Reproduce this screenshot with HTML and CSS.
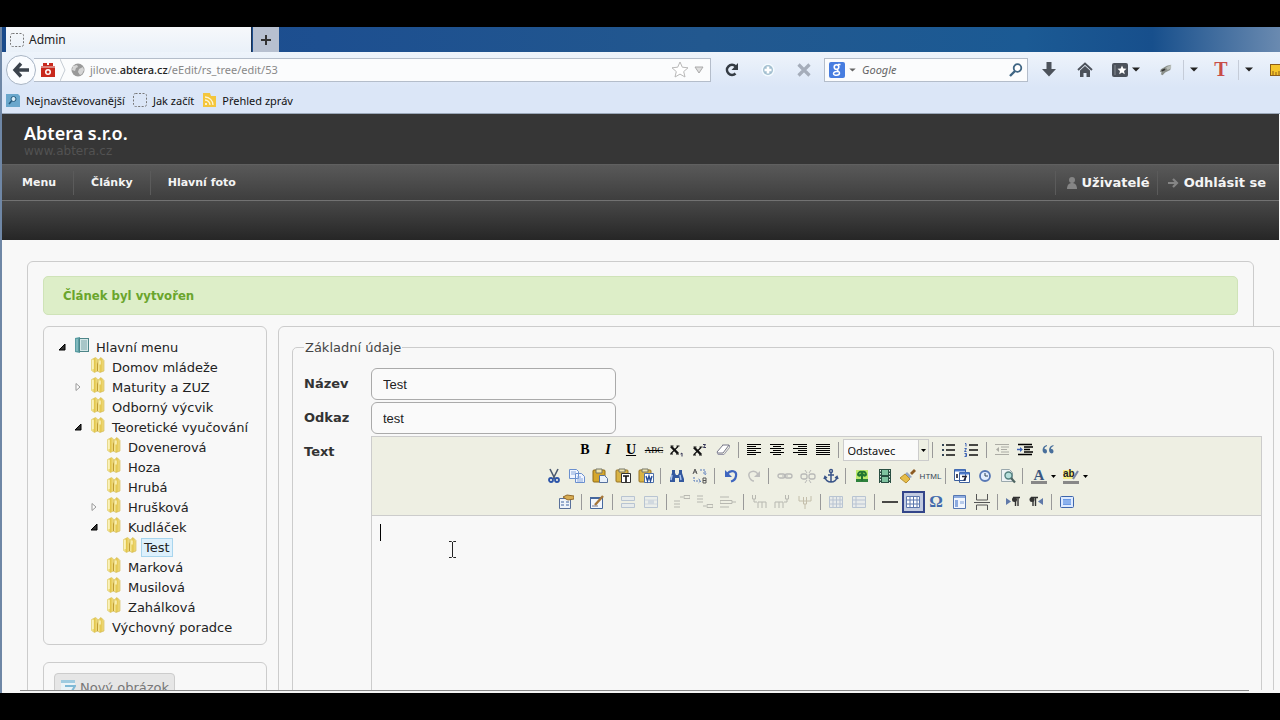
FILE: index.html
```html
<!DOCTYPE html>
<html lang="cs">
<head>
<meta charset="utf-8">
<title>Admin</title>
<link rel="stylesheet" href="styles.css">
</head>
<body>
<svg class="defs" aria-hidden="true">
  <defs>
    <linearGradient id="gold" x1="0" x2="1"><stop offset="0" stop-color="#fdf6b4"/><stop offset=".5" stop-color="#e3c64c"/><stop offset="1" stop-color="#f3e08a"/></linearGradient>
  </defs>
  <symbol id="folder" viewBox="0 0 16 16"><path d="M1.500 2.500l4-2 2 1.500v12l-3 1.500-3-2z" fill="url(#gold)" stroke="#d9c25c" stroke-width=".6"/><path d="M8 3l3-2.500 3 3v10.500l-4 1.500-2.500-1.500z" fill="url(#gold)" stroke="#d0b549" stroke-width=".6"/><path d="M7 5l1 2v7.500l-1-.5z" fill="#c09c34"/><path d="M3 3v9M10 3.500v4" stroke="#fffbd5" stroke-width="1.200"/></symbol>
  <symbol id="open" viewBox="0 0 8 8"><path d="M7 1v6H1z" fill="#333" stroke="#000"/></symbol>
  <symbol id="closed" viewBox="0 0 8 8"><path d="M2 .5v7L6 4z" fill="#fff" stroke="#999"/></symbol>
  <symbol id="down" viewBox="0 0 8 5"><path d="M0 .5h8L4 4.500z" fill="currentColor"/></symbol>
  <symbol id="blank" viewBox="0 0 14 14"><rect x=".5" y=".5" width="13" height="13" rx="2" fill="none" stroke="#777" stroke-dasharray="2 1.500"/></symbol>
</svg>
<div class="window">
  <div class="tabs">
    <div class="tab"><svg width="14" height="14"><use href="#blank"/></svg><span>Admin</span></div>
    <button class="newtab" aria-label="Nový panel"><svg width="12" height="12" viewBox="0 0 12 12"><path d="M6 1v10M1 6h10" stroke="#333" stroke-width="2"/></svg></button>
  </div>
  <div class="navbar">
    <button class="back" aria-label="Zpět"><svg width="18" height="16" viewBox="0 0 18 16"><path d="M9 1.500L3 8l6 6.500M3 8h14" fill="none" stroke="#3a424c" stroke-width="3.400"/></svg></button>
    <div class="urlbar">
      <svg width="14" height="14" viewBox="0 0 14 14"><path d="M0 3h2V0h4v2h2V0h4v3h2v11H0z" fill="#c8281c"/><path d="M0 4h14" stroke="#f2dedb"/><circle cx="7" cy="9" r="3" fill="#fff"/><circle cx="7" cy="9" r="1.500" fill="#c8281c"/></svg>
      <svg class="chevron" width="6" height="22" viewBox="0 0 6 22"><path d="M0 0l5 11-5 11" fill="none" stroke="#c5ccd4"/></svg>
      <svg width="14" height="14" viewBox="0 0 14 14"><circle cx="7" cy="7" r="6.500" fill="#999"/><path d="M2 3l4-1 1 2-2 1-1 3-3-1zM8 6l4-2 1 3-2 4-2 1-2-3z" fill="#d5d5d5"/></svg>
      <div class="address" role="textbox" aria-label="Adresa">jilove.<b>abtera.cz</b>/eEdit/rs_tree/edit/53</div>
      <svg width="18" height="17" viewBox="0 0 18 17"><path d="M9 1l2.300 5.200 5.700.6-4.300 3.800 1.300 5.400-5-2.900L4 16l1.300-5.400L1 6.800l5.700-.6z" fill="#fff" stroke="#b8b8b8"/></svg>
      <svg width="10" height="8" viewBox="0 0 10 8"><path d="M1 1h8L5 7z" fill="#ddd" stroke="#aaa"/></svg>
    </div>
    <button class="tool" aria-label="Obnovit"><svg width="16" height="16" viewBox="0 0 16 16"><path d="M11.500 11.500a5 5 0 1 1 0-7.200" fill="none" stroke="#353c44" stroke-width="2.600"/><path d="M14 1v7H7.500z" fill="#353c44"/></svg></button>
    <button class="tool" aria-label="Přidat"><svg width="14" height="14" viewBox="0 0 14 14"><circle cx="7" cy="7" r="6.500" fill="#f4fbff"/><circle cx="7" cy="7" r="5" fill="#a3bfd0"/><path d="M7 3.500v7M3.500 7h7" stroke="#fff" stroke-width="2.600"/></svg></button>
    <button class="tool" aria-label="Zastavit"><svg width="14" height="14" viewBox="0 0 14 14"><path d="M1.500 1.500l11 11M12.500 1.500l-11 11" stroke="#a5adba" stroke-width="3.200"/></svg></button>
    <div class="search">
      <svg width="16" height="16" viewBox="0 0 16 16"><rect width="16" height="16" rx="2" fill="#477de0"/><circle cx="7.500" cy="5" r="2.300" fill="none" stroke="#fff" stroke-width="1.600"/><path d="M9 2.500h2.500M8.500 7.500c-1 1.500 2 1.500 2 3.500 0 3-6 3-6 .5 0-2 3-2.300 4.500-1.800" fill="none" stroke="#fff" stroke-width="1.500"/></svg>
      <svg class="mini" width="7" height="4"><use href="#down"/></svg>
      <input type="text" placeholder="Google" aria-label="Vyhledávání">
      <svg width="14" height="14" viewBox="0 0 14 14"><circle cx="8.500" cy="5" r="3.800" fill="#fff" stroke="#3f6583" stroke-width="1.800"/><path d="M6 8l-5 5" stroke="#3f6583" stroke-width="2.400"/></svg>
    </div>
    <button class="tool" aria-label="Stahování"><svg width="14" height="15" viewBox="0 0 14 15"><path d="M4.500 0h5v7H14l-7 7.500L0 7h4.500z" fill="#4c525b"/></svg></button>
    <button class="tool" aria-label="Domů"><svg width="16" height="15" viewBox="0 0 16 15"><path d="M1 8l7-6.500L15 8" fill="none" stroke="#4c525b" stroke-width="1.900"/><path d="M3 8.500l5-4.500 5 4.500V15h-3.500v-4h-3v4H3z" fill="#4c525b"/></svg></button>
    <button class="tool duo" aria-label="Záložky"><svg width="16" height="14" viewBox="0 0 16 14"><rect width="16" height="14" rx="2" fill="#4c525b"/><path d="M3 2v10" stroke="#858b93"/><path d="M10 2.500l1.300 3 3.200.3-2.500 2.200.8 3.200-2.800-1.700-2.800 1.700L8 8 5.500 5.800l3.200-.3z" fill="#fff"/></svg><svg width="8" height="5"><use href="#down"/></svg></button>
    <button class="tool narrow" aria-label="Nástroj"><svg width="14" height="12" viewBox="0 0 16 14"><path d="M2 6l7-4 5-1-1 6-6 3-3 3-2-1 1-2-2-1z" fill="#8b908b"/><path d="M8 4l6-3v4l-4 2z" fill="#b8bdb8"/><path d="M3 8l4-2" stroke="#333" stroke-width="2"/></svg></button>
    <button class="drop" aria-label="Nabídka nástroje"><svg width="8" height="5"><use href="#down"/></svg></button>
    <button class="tool narrow red">T</button>
    <button class="drop" aria-label="Nabídka textu"><svg width="8" height="5"><use href="#down"/></svg></button>
    <button class="ruler" aria-label="Pravítko"><svg width="18" height="12" viewBox="0 0 18 12"><rect x=".5" y=".5" width="17" height="11" fill="#f5c52c" stroke="#8d5d18"/><path d="M3 11V7M6 11V8M9 11V7" stroke="#8d5d18"/></svg></button>
  </div>
  <div class="bookmarks">
    <a href="#"><svg width="14" height="14" viewBox="0 0 14 14"><path d="M0 1h12l2 2v11H0z" fill="#6aa7cc"/><circle cx="7.500" cy="6" r="2.500" fill="#d8ecf7" stroke="#24597c"/><path d="M5.500 8L3 11" stroke="#24597c" stroke-width="1.500"/></svg>Nejnavštěvovanější</a>
    <a href="#"><svg width="14" height="14"><use href="#blank"/></svg>Jak začít</a>
    <a href="#"><svg width="14" height="14" viewBox="0 0 14 14"><path d="M1 0h7l1 3h5v11H1z" fill="#f4c63d"/><circle cx="4" cy="11" r="1" fill="#fff"/><path d="M3 7a5 5 0 0 1 5 5M3 4a8 8 0 0 1 8 8" fill="none" stroke="#fff6d5" stroke-width="1.300"/></svg>Přehled zpráv</a>
  </div>
  <div class="page">
    <header>
      <div class="brand"><h1>Abtera s.r.o.</h1><span>www.abtera.cz</span></div>
      <nav>
        <a href="#">Menu</a><a href="#">Články</a><a href="#">Hlavní foto</a>
        <div class="user">
          <a href="#"><svg width="12" height="12" viewBox="0 0 12 12"><circle cx="6" cy="3" r="3" fill="#858585"/><path d="M1 12c0-4 2-6 5-6s5 2 5 6z" fill="#858585"/></svg>Uživatelé</a>
          <a href="#"><svg width="12" height="10" viewBox="0 0 12 10"><path d="M0 5h8M5 1l4 4-4 4" fill="none" stroke="#858585" stroke-width="2.200"/></svg>Odhlásit se</a>
        </div>
      </nav>
      <div class="subnav"></div>
    </header>
    <main class="panel">
      <p class="message">Článek byl vytvořen</p>
      <div class="columns">
        <aside>
          <div class="box tree">
            <ul>
              <li><div class="row"><svg class="tw" ><use href="#open"/></svg><svg class="ic" viewBox="0 0 16 16"><path d="M1 1l5-1v16l-5-1z" fill="#5a9da3"/><rect x="5.500" y="1.500" width="9" height="13" fill="#d5e8e8" stroke="#4d8589"/><path d="M7 4h6M7 6h6M7 8h6M7 10h6M7 12h6" stroke="#7aa4a8"/><path d="M3 2v12" stroke="#a9d5d8"/></svg><a href="#">Hlavní menu</a></div>
                <ul>
                  <li><div class="row"><i class="tw"></i><svg class="ic"><use href="#folder"/></svg><a href="#">Domov mládeže</a></div></li>
                  <li><div class="row"><svg class="tw"><use href="#closed"/></svg><svg class="ic"><use href="#folder"/></svg><a href="#">Maturity a ZUZ</a></div></li>
                  <li><div class="row"><i class="tw"></i><svg class="ic"><use href="#folder"/></svg><a href="#">Odborný výcvik</a></div></li>
                  <li><div class="row"><svg class="tw"><use href="#open"/></svg><svg class="ic"><use href="#folder"/></svg><a href="#">Teoretické vyučování</a></div>
                    <ul>
                      <li><div class="row"><i class="tw"></i><svg class="ic"><use href="#folder"/></svg><a href="#">Dovenerová</a></div></li>
                      <li><div class="row"><i class="tw"></i><svg class="ic"><use href="#folder"/></svg><a href="#">Hoza</a></div></li>
                      <li><div class="row"><i class="tw"></i><svg class="ic"><use href="#folder"/></svg><a href="#">Hrubá</a></div></li>
                      <li><div class="row"><svg class="tw"><use href="#closed"/></svg><svg class="ic"><use href="#folder"/></svg><a href="#">Hrušková</a></div></li>
                      <li><div class="row"><svg class="tw"><use href="#open"/></svg><svg class="ic"><use href="#folder"/></svg><a href="#">Kudláček</a></div>
                        <ul><li><div class="row"><i class="tw"></i><svg class="ic"><use href="#folder"/></svg><a class="selected" href="#">Test</a></div></li></ul>
                      </li>
                      <li><div class="row"><i class="tw"></i><svg class="ic"><use href="#folder"/></svg><a href="#">Marková</a></div></li>
                      <li><div class="row"><i class="tw"></i><svg class="ic"><use href="#folder"/></svg><a href="#">Musilová</a></div></li>
                      <li><div class="row"><i class="tw"></i><svg class="ic"><use href="#folder"/></svg><a href="#">Zahálková</a></div></li>
                    </ul>
                  </li>
                  <li><div class="row"><i class="tw"></i><svg class="ic"><use href="#folder"/></svg><a href="#">Výchovný poradce</a></div></li>
                </ul>
              </li>
            </ul>
          </div>
          <div class="box images">
            <button><svg width="16" height="16" viewBox="0 0 16 16"><path d="M1 1h14v4l-4 6H1z" fill="#eaf3f7"/><path d="M1 1h14v3H1z" fill="#9fcbe0"/><path d="M5 7h10l-3 5" fill="none" stroke="#7fb9d6" stroke-width="2"/></svg>Nový obrázok</button>
          </div>
        </aside>
        <form class="box">
          <fieldset>
            <legend>Základní údaje</legend>
            <label for="name">Název</label><input id="name" type="text" value="Test">
            <label for="link">Odkaz</label><input id="link" type="text" value="test">
            <label for="text">Text</label>
            <div class="editor">
              <div class="toolbar">
                <div class="line">
                  <button type="button" class="letter"><b>B</b></button>
                  <button type="button" class="letter"><i>I</i></button>
                  <button type="button" class="letter"><u>U</u></button>
                  <button type="button" class="abc"><s>ABC</s></button>
                  <button type="button" aria-label="Dolní index"><svg class="g" viewBox="0 0 16 16"><path d="M2 4.500l7 7" stroke="#111" stroke-width="2.400"/><path d="M9 4.500l-7 7M1.500 4h3M7.500 4h3M1 12h3M7 12h3" stroke="#111" stroke-width="1.200"/><path d="M11.500 12l1.500-1v3.500" fill="none" stroke="#335"/></svg></button>
                  <button type="button" aria-label="Horní index"><svg class="g" viewBox="0 0 16 16"><path d="M2 5.500l7 7" stroke="#111" stroke-width="2.400"/><path d="M9 5.500l-7 7M1.500 5h3M7.500 5h3M1 13h3M7 13h3" stroke="#111" stroke-width="1.200"/><path d="M11 2.500h2.500l-2 3H14" fill="none" stroke="#335"/></svg></button>
                  <button type="button" aria-label="Vymazat formát"><svg class="g" viewBox="0 0 16 16"><path d="M2 10l6-7h6l-6 8H3zM8 3l-1 .5" fill="#fff" stroke="#778"/><path d="M2 10l1 2.500h6l5.500-7V3" fill="none" stroke="#99a"/></svg></button>
                  <span class="sep"></span>
                  <button type="button" aria-label="Vlevo"><svg class="g" viewBox="0 0 16 16"><path d="M1 2.500h14M1 4.500h9M1 6.500h14M1 8.500h9M1 10.500h14M1 12.500h9" stroke="#000"/></svg></button>
                  <button type="button" aria-label="Na střed"><svg class="g" viewBox="0 0 16 16"><path d="M1 2.500h14M4 4.500h8M1 6.500h14M4 8.500h8M1 10.500h14M4 12.500h8" stroke="#000"/></svg></button>
                  <button type="button" aria-label="Vpravo"><svg class="g" viewBox="0 0 16 16"><path d="M1 2.500h14M6 4.500h9M1 6.500h14M6 8.500h9M1 10.500h14M6 12.500h9" stroke="#000"/></svg></button>
                  <button type="button" aria-label="Do bloku"><svg class="g" viewBox="0 0 16 16"><path d="M1 2.500h14M1 4.500h14M1 6.500h14M1 8.500h14M1 10.500h14M1 12.500h14" stroke="#000"/></svg></button>
                  <span class="sep"></span>
                  <span class="format"><select aria-label="Formát"><option>Odstavec</option></select><span class="arrow"><svg width="5" height="3" viewBox="0 0 5 3"><path d="M0 0h5L2.500 3z"/></svg></span></span>
                  <span class="sep"></span>
                  <button type="button" aria-label="Odrážky"><svg class="g" viewBox="0 0 16 16"><path d="M6 3h9M6 8h9M6 13h9" stroke="#111" stroke-width="1.300"/><path d="M2 2h2v2H2zM2 7h2v2H2zM2 12h2v2H2z" fill="#345"/></svg></button>
                  <button type="button" aria-label="Číslování"><svg class="g" viewBox="0 0 16 16"><path d="M6 3h9M6 8h9M6 13h9" stroke="#111" stroke-width="1.300"/><path d="M2 1.500h1v3M1.500 6.500h2l-2 3h2M1.500 11.500h2v3h-2M2 13h1" fill="none" stroke="#3c62b4"/></svg></button>
                  <span class="sep"></span>
                  <button type="button" class="off" aria-label="Zmenšit odsazení"><svg class="g" viewBox="0 0 16 16"><path d="M1 2.500h14M7 5h8M7 7.500h6M7 10h8M1 12.500h14" stroke="#333"/><path d="M5 5L2 7.500 5 10z" fill="#333"/></svg></button>
                  <button type="button" aria-label="Zvětšit odsazení"><svg class="g" viewBox="0 0 16 16"><path d="M1 2.500h14M7 5h9M7 7.500h6M7 10h9M1 12.500h14" stroke="#000" stroke-width="1.300"/><path d="M0 7.500h4" stroke="#3c62b4" stroke-width="1.500"/><path d="M3 5l3 2.500L3 10z" fill="#3c62b4"/></svg></button>
                  <button type="button" aria-label="Citace"><svg class="g" viewBox="0 0 16 16"><path d="M7 3C3 4 2 7 3 10c1 2 4 2 4-.500S5 7 4.500 7C4.500 5 6 4.500 7 4zM13.500 3c-4 1-5 4-4 7 1 2 4 2 4-.500S11.500 7 11 7c0-2 1.500-2.500 2.500-3z" fill="#486f9b"/></svg></button>
                </div>
                <div class="line">
                  <button type="button" aria-label="Vyjmout"><svg class="g" viewBox="0 0 16 16"><path d="M4 1l5 10M12 1L7 11" stroke="#4b5a70" stroke-width="1.600"/><circle cx="5" cy="12" r="2" fill="none" stroke="#2c54a8" stroke-width="1.800"/><circle cx="11" cy="12" r="2" fill="none" stroke="#2c54a8" stroke-width="1.800"/></svg></button>
                  <button type="button" aria-label="Kopírovat"><svg class="g" viewBox="0 0 16 16"><path d="M.5 1.500h7l2 2v7h-9zM6.500 5.500h6l3 3v6h-9z" fill="#f0f5ff" stroke="#6a8fce"/><path d="M2 4h5M2 6h4M8 9h4M8 11h6M8 13h6" stroke="#89a8dc"/></svg></button>
                  <button type="button" aria-label="Vložit"><svg class="g" viewBox="0 0 16 16"><rect x="1" y="2" width="12" height="12" rx="1" fill="#d5a72c" stroke="#8e6a16"/><path d="M4 1h6v4H4z" fill="#eee4ae" stroke="#776"/><path d="M7.500 7.500h5l3 3v4h-8z" fill="#e9f1fb" stroke="#56719d"/></svg></button>
                  <button type="button" aria-label="Vložit text"><svg class="g" viewBox="0 0 16 16"><rect x="1" y="2" width="12" height="12" rx="1" fill="#d8b344" stroke="#987424"/><path d="M4 1h6v3H4z" fill="#eee4ae" stroke="#776"/><path d="M6.500 5.500h9v9h-9z" fill="#fff" stroke="#333"/><path d="M8 8h6M11 8v6" stroke="#111" stroke-width="1.600"/></svg></button>
                  <button type="button" aria-label="Vložit z Wordu"><svg class="g" viewBox="0 0 16 16"><rect x="1" y="2" width="12" height="12" rx="1" fill="#d8b344" stroke="#987424"/><path d="M4 1h6v3H4z" fill="#eee4ae" stroke="#776"/><path d="M6.500 5.500h9v9h-9z" fill="#fff" stroke="#4c6fa8"/><path d="M8 8l1.500 5L11 8l1.500 5L14 8" fill="none" stroke="#274e9a" stroke-width="1.400"/></svg></button>
                  <span class="sep"></span>
                  <button type="button" aria-label="Najít"><svg class="g" viewBox="0 0 16 16"><path d="M3 2h3v3l1 2h2l1-2V2h3v3l2 6v3h-5v-4H6v4H1v-3l2-6z" fill="#33589e"/><path d="M3 7l-1 5M11 7l1 5" stroke="#a9c2ee" stroke-width="1.500"/></svg></button>
                  <button type="button" aria-label="Nahradit"><svg class="g" viewBox="0 0 16 16"><path d="M1 6l2-5 2 5M2 4h3M11 15v-5h3v5h-3M11 12.500h3" fill="none" stroke="#555"/><path d="M8 2h5v4M2 9v4h6M11.500 4.500L13 7l1.500-2.500M6.500 11L9 13l-2.500 2" fill="none" stroke="#5579bb" stroke-dasharray="2 1"/></svg></button>
                  <span class="sep"></span>
                  <button type="button" aria-label="Zpět"><svg class="g" viewBox="0 0 16 16"><path d="M4 6c4-5 10-3 9 2-.500 3-3 5-5 5.500" fill="none" stroke="#3f66bf" stroke-width="2.200"/><path d="M2 2v7h7z" fill="#3f66bf"/></svg></button>
                  <button type="button" class="off" aria-label="Znovu"><svg class="g" viewBox="0 0 16 16"><path d="M12 6C8 1 2 4 3 8c.5 3 3 5 5 5" fill="none" stroke="#667" stroke-width="1.500"/><path d="M14 3v6H8z" fill="#667"/></svg></button>
                  <span class="sep"></span>
                  <button type="button" class="off" aria-label="Odkaz"><svg class="g" viewBox="0 0 16 16"><rect x="1" y="6" width="7" height="4" rx="2" fill="none" stroke="#556" stroke-width="1.300"/><rect x="8" y="6" width="7" height="4" rx="2" fill="none" stroke="#556" stroke-width="1.300"/><path d="M5 8h6" stroke="#556"/></svg></button>
                  <button type="button" class="off" aria-label="Zrušit odkaz"><svg class="g" viewBox="0 0 16 16"><rect x="1" y="6" width="6" height="5" rx="2" fill="none" stroke="#556" stroke-width="1.300"/><rect x="9" y="6" width="6" height="5" rx="2" fill="none" stroke="#556" stroke-width="1.300"/><path d="M5 2l2 3M11 2L9 5M5 15l2-3M11 15l-2-3" stroke="#556"/></svg></button>
                  <button type="button" aria-label="Kotva"><svg class="g" viewBox="0 0 16 16"><circle cx="8" cy="3" r="1.500" fill="none" stroke="#3a5488" stroke-width="1.400"/><path d="M8 4.500V14M5 7h6M2 9c0 3 3 5 6 5s6-2 6-5M1 11l1-2.500L4 10M15 11l-1-2.500L12 10" fill="none" stroke="#3a5488" stroke-width="1.500"/></svg></button>
                  <span class="sep"></span>
                  <button type="button" aria-label="Obrázek"><svg class="g" viewBox="0 0 16 16"><path d="M2 2h12v12H2z" fill="#bdea6c"/><path d="M2 11h12v3H2z" fill="#2e813c"/><path d="M3 7c0-3 3-5 5-4 3-1 5 1 5 4-1 2-3 2-4 1v5H7V8C6 9 4 9 3 7z" fill="#237532"/><path d="M5 6l2-1M9 5l2 1" stroke="#8ed34d"/></svg></button>
                  <button type="button" aria-label="Média"><svg class="g" viewBox="0 0 16 16"><path d="M2 1h12v14H2z" fill="#294f42"/><path d="M5 2h6v5H5zM5 9h6v5H5z" fill="#7fc2a0"/><path d="M3.500 2v13M12.500 2v13" stroke="#e5eee9" stroke-dasharray="1.500 1.500"/></svg></button>
                  <button type="button" aria-label="Vyčistit"><svg class="g" viewBox="0 0 16 16"><path d="M10 5l4-4 2 2-4 4z" fill="#8b5a22"/><path d="M7 4l5 5-4 2-4-4z" fill="#93a7c6"/><path d="M5 6l5 5-4 4-6-5z" fill="#e6bd48" stroke="#b58d32"/></svg></button>
                  <button type="button" class="html">HTML</button>
                  <span class="sep"></span>
                  <button type="button" aria-label="Datum"><svg class="g" viewBox="0 0 16 16"><path d="M.5 1.500h11v11H.5zM5.500 4.500h10v10h-10z" fill="#fff" stroke="#3b5f9e"/><path d="M1 2.500h10M6 5.500h9" stroke="#4d7acb" stroke-width="2"/><path d="M3 6v4M8 8.500h4l-2 4" fill="none" stroke="#223" stroke-width="1.600"/></svg></button>
                  <button type="button" aria-label="Čas"><svg class="g" viewBox="0 0 16 16"><circle cx="8" cy="8" r="5" fill="#e5efff" stroke="#5878b5" stroke-width="1.800"/><path d="M8 5v3h3" fill="none" stroke="#345"/></svg></button>
                  <button type="button" aria-label="Náhled"><svg class="g" viewBox="0 0 16 16"><path d="M1.500 1.500h8l3 3v9h-11z" fill="#eef2f4" stroke="#9aa8ad"/><circle cx="8.500" cy="7.500" r="3.500" fill="#b5dedb" stroke="#54807e" stroke-width="1.400"/><path d="M11 10l4 4.500" stroke="#4e6462" stroke-width="2.200"/></svg></button>
                  <span class="sep"></span>
                  <button type="button" class="wide"><svg class="g" viewBox="0 0 16 16"><text class="ink" x="8" y="12" text-anchor="middle">A</text><path d="M0 13h16v3H0z" fill="#888"/></svg><svg width="5" height="3" viewBox="0 0 5 3"><path d="M0 0h5L2.500 3z"/></svg></button>
                  <button type="button" class="wide"><svg class="g" viewBox="0 0 16 16"><path d="M0 2h10v9H0z" fill="#f6ef84"/><text class="marker" x="0" y="9">ab</text><path d="M10 11l5-8" stroke="#7886a5" stroke-width="2"/><path d="M0 13h16v3H0z" fill="#888"/></svg><svg width="5" height="3" viewBox="0 0 5 3"><path d="M0 0h5L2.500 3z"/></svg></button>
                </div>
                <div class="line">
                  <button type="button" aria-label="Vlastnosti"><svg class="g" viewBox="0 0 16 16"><path d="M1.500 4.500h11v10h-11z" fill="#edf3fa" stroke="#58709a"/><path d="M3 8h3M3 11h3M8 8h3M8 11h3" stroke="#7a94c0" stroke-width="1.500"/><path d="M5 3l4-2 7 1v3l-6 1-2-1z" fill="#d8ad52" stroke="#92692a"/></svg></button>
                  <span class="sep"></span>
                  <button type="button" aria-label="Styl"><svg class="g" viewBox="0 0 16 16"><path d="M1.500 3.500h12v11h-12z" fill="#f2f6fc" stroke="#46689e"/><path d="M1 4h13" stroke="#46689e" stroke-width="2"/><path d="M6 11l8-9" stroke="#a5763a" stroke-width="2.400"/><path d="M3 12h6" stroke="#778"/></svg></button>
                  <span class="sep"></span>
                  <button type="button" class="off" aria-label="Řádek"><svg class="g" viewBox="0 0 16 16"><path d="M1.500 2.500h13v4h-13zM1.500 9.500h13v4h-13z" fill="#dbe5fa" stroke="#5675b5"/></svg></button>
                  <button type="button" class="off" aria-label="Buňka"><svg class="g" viewBox="0 0 16 16"><path d="M1.500 2.500h13v11h-13z" fill="#e8edf8" stroke="#5675b5"/><path d="M5 6h6v4H5z" fill="#9eb2dd"/><path d="M2 6h12M2 10h12" stroke="#99acd5"/></svg></button>
                  <span class="sep"></span>
                  <button type="button" class="off" aria-label="Vložit řádek před"><svg class="g" viewBox="0 0 16 16"><path d="M0 7h6M0 10h6M0 13h6M6 3h3M10 1.500h6v3h-6z" fill="none" stroke="#555"/></svg></button>
                  <button type="button" class="off" aria-label="Vložit řádek za"><svg class="g" viewBox="0 0 16 16"><path d="M0 2h6M0 5h6M0 8h6M6 12h3M10 10.500h6v3h-6z" fill="none" stroke="#555"/></svg></button>
                  <button type="button" class="off" aria-label="Smazat řádek"><svg class="g" viewBox="0 0 16 16"><path d="M0 3h9M0 13h9M0 6.500h12v3H0zM12 8h4" fill="none" stroke="#555"/></svg></button>
                  <span class="sep"></span>
                  <button type="button" class="off" aria-label="Vložit sloupec před"><svg class="g" viewBox="0 0 16 16"><path d="M7 14V8h8v6M11 8v6M1.500 1v4h3V1M3 5v3h3" fill="none" stroke="#555"/></svg></button>
                  <button type="button" class="off" aria-label="Vložit sloupec za"><svg class="g" viewBox="0 0 16 16"><path d="M1 14V8h8v6M5 8v6M11.500 1v4h3V1M13 5v3h-3" fill="none" stroke="#555"/></svg></button>
                  <button type="button" class="off" aria-label="Smazat sloupec"><svg class="g" viewBox="0 0 16 16"><path d="M2 2v5h12V2M6.500 3v7h3V3M8 10v5" fill="none" stroke="#764"/></svg></button>
                  <span class="sep"></span>
                  <button type="button" class="off" aria-label="Rozdělit buňky"><svg class="g" viewBox="0 0 16 16"><path d="M1.500 2.500h13v11h-13zM2 6h12M2 10h12M5 3v10M8.500 3v10M12 3v10" fill="#dde6f8" stroke="#5675b5"/></svg></button>
                  <button type="button" class="off" aria-label="Sloučit buňky"><svg class="g" viewBox="0 0 16 16"><path d="M1.500 2.500h13v11h-13zM2 6h12M2 10h12M5 3v10" fill="#dde6f8" stroke="#5675b5"/></svg></button>
                  <span class="sep"></span>
                  <button type="button" aria-label="Čára"><svg class="g" viewBox="0 0 16 16"><path d="M0 8h16" stroke="#111" stroke-width="1.500"/></svg></button>
                  <button type="button" class="on" aria-label="Mřížka"><svg class="g" viewBox="0 0 16 16"><path d="M1.500 2.500h13v11h-13zM2 6h12M2 10h12M5 3v10M8.500 3v10M12 3v10" fill="#fff" stroke="#5b76ad"/></svg></button>
                  <button type="button" class="omega">Ω</button>
                  <button type="button" aria-label="Šablona"><svg class="g" viewBox="0 0 16 16"><path d="M2.500 1.500h12v13h-12z" fill="#f1f6fd" stroke="#5577b2"/><path d="M3 3h11" stroke="#8cabdf" stroke-width="2"/><path d="M4 6h3v7H4z" fill="#8cabdf"/><path d="M9 7h4v3H9z" fill="#b7cbea"/></svg></button>
                  <button type="button" aria-label="Konec stránky"><svg class="g" viewBox="0 0 16 16"><path d="M2.500 0v6h11V0M2.500 16v-5h11v5M0 8.500h16" fill="none" stroke="#555"/></svg></button>
                  <span class="sep"></span>
                  <button type="button" aria-label="Zleva doprava"><svg class="g" viewBox="0 0 16 16"><path d="M1 4l5 3.500L1 11z" fill="#6079a9"/><path d="M10.500 3v9M13 3v9M8 3.500h7" stroke="#333" stroke-width="1.400"/><circle cx="9.500" cy="5.500" r="2.500" fill="#333"/></svg></button>
                  <button type="button" aria-label="Zprava doleva"><svg class="g" viewBox="0 0 16 16"><path d="M15 4l-5 3.500 5 3.500z" fill="#6079a9"/><path d="M5 3v9M7.500 3v9M3 3.500h7" stroke="#333" stroke-width="1.400"/><circle cx="4" cy="5.500" r="2.500" fill="#333"/></svg></button>
                  <span class="sep"></span>
                  <button type="button" aria-label="Celá obrazovka"><svg class="g" viewBox="0 0 16 16"><rect x="1.500" y="2.500" width="13" height="11" rx="1" fill="#ddeaff" stroke="#3d65ac"/><path d="M4 5h8v6H4z" fill="#6c9be6"/><path d="M4 7h8M4 9h8" stroke="#a9c7f5"/></svg></button>
                </div>
              </div>
              <div class="writing"><textarea id="text"></textarea><span class="caret"></span>
                <svg class="pointer" width="9" height="17" viewBox="0 0 9 17"><path d="M1 .5h2.500l1 1 1-1H8M4.500 1v15M1 16.500h2.500l1-1 1 1H8" fill="none" stroke="#222"/></svg></div>
            </div>
          </fieldset>
        </form>
      </div>
    </main>
  </div>
  <div class="edge"></div>
</div>
</body>
</html>
```
FILE: styles.css
```css
* { box-sizing: border-box; }
body { margin: 0; background: #000; font-family: "DejaVu Sans", sans-serif; font-size: 13px; color: #333; }
button, input, select, textarea { font: inherit; color: inherit; margin: 0; }
button { padding: 0; border: 0; background: none; display: flex; align-items: center; justify-content: center; }
a { color: inherit; text-decoration: none; }
svg { flex: none; display: block; }
.defs { position: absolute; width: 0; height: 0; }

.window { height: calc(100vh - 54px); margin: 27px 0; display: flex; flex-direction: column; overflow: hidden; background: #f8f8f8; border-left: 2px solid #6f87a6; }

.tabs { display: flex; flex: none; height: 25px; padding-left: 4px; font: 12px "Noto Sans", sans-serif; color: #222; background: linear-gradient(90deg, #1a4a8a, #1d4f90 25%, #22588f 55%, #1b5a94 80%, #174f8c 90%, #6a8ab0); }
.tab { display: flex; align-items: center; gap: 5px; width: 246px; padding-left: 4px; background: linear-gradient(#f6f8fb, #eaf1f9); border-right: 1px solid #1c3252; }
.newtab { width: 26px; margin-left: 1px; background: #b7c0d0; }

.navbar { display: flex; flex: none; align-items: center; height: 35px; padding-left: 4px; overflow: hidden; background: linear-gradient(#eef4fb, #dbe6f7); color: #222; }
.back { flex: none; width: 30px; height: 30px; border: 1px solid #a9b5c4; border-radius: 50%; background: #fafcff; position: relative; }
.urlbar { flex: 1; display: flex; align-items: center; gap: 5px; min-width: 0; height: 24px; margin-left: -2px; padding: 0 6px 0 7px; background: #fbfcfd; border: 1px solid #b4bdca; border-left: 0; }
.address { flex: 1; font: 11px "Noto Sans", sans-serif; color: #888; white-space: nowrap; }
.address b { color: #222; font-weight: 500; }
.tool { flex: none; width: 36px; height: 24px; }
.urlbar + .tool { margin-left: 3px; }
.search { flex: none; display: flex; align-items: center; gap: 4px; width: 204px; height: 24px; margin: 0 3px 0 2px; padding: 0 4px; background: #fbfcfd; border: 1px solid #b4bdca; color: #666; }
.search input { flex: 1; min-width: 0; padding: 0 0 0 2px; border: 0; background: none; font: italic 11px "Noto Sans", sans-serif; }
.search input::placeholder { color: #666; }
.duo { width: 46px; gap: 4px; }
.narrow { width: 34px; }
.red { font: bold 20px "Liberation Serif", serif; color: #c84d48; }
.drop { flex: none; width: 21px; height: 20px; border-left: 1px solid #c5ccd8; }
.ruler { flex: none; margin: 0 -8px 0 11px; }

.bookmarks { display: flex; flex: none; align-items: center; gap: 8px; height: 27px; padding-left: 4px; background: #dbe6f7; border-bottom: 1px solid #9aa7b8; font: 11px "Noto Sans", sans-serif; color: #111; }
.bookmarks a { display: flex; align-items: center; gap: 6px; }

.page { flex: 1; min-height: 0; overflow: hidden; }
header { margin-right: 1px; color: #f4f4f4; }
.brand { height: 50px; padding: 7px 22px 0; background: #363636; }
.brand h1 { margin: 0; font: 600 18px/24px "Noto Sans", sans-serif; color: #fff; }
.brand span { display: block; font-size: 12px; line-height: 13px; color: #525252; }
nav { display: flex; align-items: center; height: 36px; padding-left: 3px; background: linear-gradient(#595959, #3e3e3e); border-top: 1px solid #606060; font-size: 11px; font-weight: bold; }
nav a { display: flex; align-items: center; height: 24px; padding: 0 17px; border-right: 1px solid #5b5b5b; }
nav > a:nth-of-type(3) { border: 0; }
.user { display: flex; margin-left: auto; font-size: 13px; border-left: 1px solid #5b5b5b; }
.user a { gap: 4px; padding: 0 7px 0 10px; }
.user a:last-child { padding-right: 13px; border: 0; }
.subnav { height: 40px; background: linear-gradient(#484848, #262626); border-top: 1px solid #727272; }

.panel { margin: 21px 26px 0 25px; padding: 14px 15px; border: 1px solid #ccc; border-radius: 6px; }
.message { margin: 0 0 11px; padding: 0 19px; border: 1px solid #cfe3b8; border-radius: 5px; background: #ddeec8; color: #6aa52c; font: bold 13px/37px "DejaVu Sans Condensed", "DejaVu Sans", sans-serif; }
.columns { display: flex; align-items: flex-start; gap: 11px; }
aside { flex: none; width: 224px; }
.box { border: 1px solid #ccc; border-radius: 6px; background: #f8f8f8; }
.tree { padding: 10px 0 7px 14px; margin-bottom: 17px; color: #222; }
.tree ul { list-style: none; margin: 0; padding: 0; }
.tree ul ul { padding-left: 16px; }
.row { display: flex; align-items: center; height: 20px; white-space: nowrap; }
.tw { width: 8px; height: 8px; margin-right: 8px; }
.ic { width: 16px; height: 16px; margin: 0 3px 4px 0; }
.row a { padding: 0 2px; border: 1px solid transparent; line-height: 17px; }
.row .selected { background: #ddf0fc; border-color: #a8d5ee; }
.images { padding: 10px; }
.images button { height: 28px; padding: 0 5px; gap: 4px; border: 1px solid #ccc; border-radius: 4px; background: #e6e6e6; color: #777; }

form.box { flex: 1; min-width: 0; margin-right: -50px; padding: 12px 13px; }
fieldset { display: grid; grid-template-columns: 67px minmax(0, 1fr); row-gap: 2px; margin: 0; padding: 12px 11px; border: 1px solid #ccc; border-radius: 5px; min-width: 0; }
legend { padding: 0 1px; line-height: 17px; color: #444; }
label { font-weight: bold; line-height: 32px; }
fieldset > input { width: 245px; height: 32px; padding: 0 11px; border: 1px solid #aaa; border-radius: 6px; background: #fafafa; font: 13px "Liberation Sans", sans-serif; color: #222; }
.editor { border: 1px solid #ccc; min-width: 0; }
.toolbar { background: #eeefe3; border-bottom: 1px solid #ccc; }
.line { display: flex; align-items: center; justify-content: center; height: 26px; }
.line button { flex: none; width: 23px; height: 22px; }
.g { width: 16px; height: 16px; }
.line .wide { width: 32px; gap: 4px; color: #000; }
.line .off { opacity: .35; }
.line .on { background: #c2cbe0; border: 2px solid #33458a; }
.line .letter { font: bold 14px "Liberation Serif", serif; color: #000; }
.line .abc { font: 9px "Liberation Serif", serif; color: #000; }
.line .html { font: 8px "Liberation Sans", sans-serif; color: #345; }
.line .omega { font: bold 17px "Liberation Serif", serif; color: #426aac; }
.ink { font: bold 15px "Liberation Serif", serif; fill: #3b5780; }
.marker { font: bold 10px "Liberation Sans", sans-serif; fill: #222; }
.sep { flex: none; width: 1px; height: 16px; margin: 0 4px 0 3px; background: #999; }
.format { display: flex; width: 86px; height: 22px; border: 1px solid #ccc; background: #fafafa; }
.format select { flex: 1; min-width: 0; appearance: none; border: 0; border-radius: 0; padding: 0 4px; background: none; font: 11px "Noto Sans", sans-serif; color: #111; }
.arrow { display: flex; align-items: center; justify-content: center; width: 10px; background: #eeefe3; border-left: 1px solid #ccc; color: #000; }
.writing { position: relative; }
.writing textarea { display: block; width: 100%; height: 260px; border: 0; padding: 8px; resize: none; outline: 0; background: #f8f8f8; }
.caret { position: absolute; left: 8px; top: 8px; width: 1px; height: 17px; background: #000; }
.pointer { position: absolute; left: 76px; top: 25px; }

.edge { flex: none; height: 3px; margin: 0 31px 0 18px; border-top: 1px solid #888; background: #f3f3f3; }
```
